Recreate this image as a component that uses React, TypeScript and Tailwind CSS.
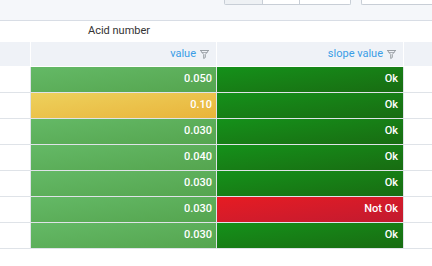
import React from "react";

type Row = { value: string; level: "good" | "warn"; slope: "Ok" | "Not Ok" };

const rows: Row[] = [
  { value: "0.050", level: "good", slope: "Ok" },
  { value: "0.10", level: "warn", slope: "Ok" },
  { value: "0.030", level: "good", slope: "Ok" },
  { value: "0.040", level: "good", slope: "Ok" },
  { value: "0.030", level: "good", slope: "Ok" },
  { value: "0.030", level: "good", slope: "Not Ok" },
  { value: "0.030", level: "good", slope: "Ok" },
];

const FilterIcon = () => (
  <svg width="11" height="11" viewBox="0 0 11 11" fill="none" className="ml-[3px]">
    <path d="M1 1.5h9M1.5 1.5l3.2 4v4l1.6-1v-3l3.2-4" stroke="#9aa0a6" strokeWidth="1" strokeLinejoin="round" />
    <path d="M2.5 3.5h6" stroke="#9aa0a6" strokeWidth="0.8" />
  </svg>
);

export default function App() {
  return (
    <div className="w-[432px] h-[266px] overflow-hidden bg-white font-['Roboto','Liberation_Sans',sans-serif] text-[11px]">
      {/* toolbar */}
      <div className="flex items-start h-[21px] bg-[#f5f7fa] border-b border-[#d8dde5]">
        <div className="flex ml-[224px] h-[5px] border border-t-0 border-[#c8ced6] rounded-b-[2px] bg-white">
          <div className="w-[38px] bg-[#eef1f4] border-r border-[#c8ced6]" />
          <div className="w-[37px] border-r border-[#c8ced6]" />
          <div className="w-[50px]" />
        </div>
        <div className="ml-[10px] flex-1 h-[5px] border border-t-0 border-r-0 border-[#c8ced6] rounded-bl-[2px] bg-white" />
      </div>

      {/* group header */}
      <div className="h-[21px] flex items-center pl-[88px] text-[#333]">Acid number</div>

      {/* column header */}
      <div className="flex h-[25px] bg-[#eff2f7] border-b border-white">
        <div className="w-[31px] border-r border-white" />
        <div className="w-[186px] border-r border-white flex items-center justify-end pr-[6px] text-[#3a9de6]">
          value
          <FilterIcon />
        </div>
        <div className="w-[187px] border-r border-white flex items-center justify-end pr-[6px] text-[#3a9de6]">
          slope value
          <FilterIcon />
        </div>
        <div className="flex-1" />
      </div>

      {/* body */}
      {rows.map((row, i) => (
        <div key={i} className="flex h-[26px] border-b border-[#dfe3e8]">
          <div className="w-[31px] border-r border-[#dfe3e8]" />
          <div
            className={
              row.level === "warn"
                ? "w-[186px] border-r border-[#dfe3e8] flex items-center justify-end pr-[4px] text-white font-medium bg-linear-to-br from-[#edd15c] to-[#e9b43a]"
                : "w-[186px] border-r border-[#dfe3e8] flex items-center justify-end pr-[4px] text-white font-medium bg-linear-to-br from-[#64b966] to-[#55a54f]"
            }
          >
            {row.value}
          </div>
          <div
            className={
              row.slope === "Ok"
                ? "w-[187px] border-r border-[#dfe3e8] flex items-center justify-end pr-[5px] text-white font-medium bg-linear-to-br from-[#14911a] to-[#186c12]"
                : "w-[187px] border-r border-[#dfe3e8] flex items-center justify-end pr-[5px] text-white font-medium bg-linear-to-br from-[#e61c22] to-[#c21a2f]"
            }
          >
            {row.slope}
          </div>
          <div className="flex-1" />
        </div>
      ))}
    </div>
  );
}
